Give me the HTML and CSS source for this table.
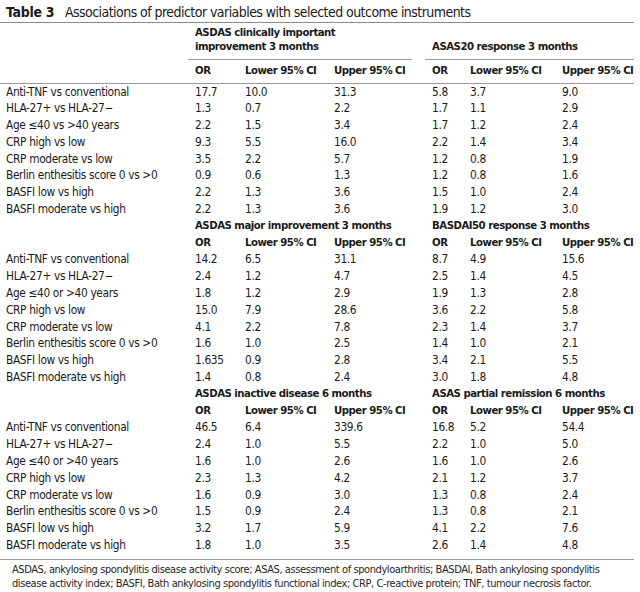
FILE: index.html
```html
<!DOCTYPE html>
<html>
<head>
<meta charset="utf-8">
<link rel="stylesheet" href="styles.css">
</head>
<body>
<div class="page">
  <div class="title"><span class="tnum">Table 3</span><span class="tcap">Associations of predictor variables with selected outcome instruments</span></div>
  <table class="data">
    <colgroup>
      <col class="c-label"><col class="c-or"><col class="c-lo"><col class="c-up"><col class="c-gap"><col class="c-or2"><col class="c-lo2"><col class="c-up2">
    </colgroup>
    <thead>
      <tr class="grp">
        <th></th>
        <th colspan="3" class="gh">ASDAS clinically important<br>improvement 3 months</th>
        <th class="gap"></th>
        <th colspan="3" class="gh">ASAS20 response 3 months</th>
      </tr>
      <tr class="sub">
        <th></th><th>OR</th><th>Lower 95% CI</th><th>Upper 95% CI</th><th></th><th>OR</th><th>Lower 95% CI</th><th>Upper 95% CI</th>
      </tr>
    </thead>
    <tbody>
      <tr><td>Anti-TNF vs conventional</td><td>17.7</td><td>10.0</td><td>31.3</td><td></td><td>5.8</td><td>3.7</td><td>9.0</td></tr>
      <tr><td>HLA-27+ vs HLA-27−</td><td>1.3</td><td>0.7</td><td>2.2</td><td></td><td>1.7</td><td>1.1</td><td>2.9</td></tr>
      <tr><td>Age ≤40 vs &gt;40 years</td><td>2.2</td><td>1.5</td><td>3.4</td><td></td><td>1.7</td><td>1.2</td><td>2.4</td></tr>
      <tr><td>CRP high vs low</td><td>9.3</td><td>5.5</td><td>16.0</td><td></td><td>2.2</td><td>1.4</td><td>3.4</td></tr>
      <tr><td>CRP moderate vs low</td><td>3.5</td><td>2.2</td><td>5.7</td><td></td><td>1.2</td><td>0.8</td><td>1.9</td></tr>
      <tr><td>Berlin enthesitis score 0 vs &gt;0</td><td>0.9</td><td>0.6</td><td>1.3</td><td></td><td>1.2</td><td>0.8</td><td>1.6</td></tr>
      <tr><td>BASFI low vs high</td><td>2.2</td><td>1.3</td><td>3.6</td><td></td><td>1.5</td><td>1.0</td><td>2.4</td></tr>
      <tr><td>BASFI moderate vs high</td><td>2.2</td><td>1.3</td><td>3.6</td><td></td><td>1.9</td><td>1.2</td><td>3.0</td></tr>
      <tr class="sec"><td></td><th colspan="3">ASDAS major improvement 3 months</th><td></td><th colspan="3">BASDAI50 response 3 months</th></tr>
      <tr class="sec"><td></td><th>OR</th><th>Lower 95% CI</th><th>Upper 95% CI</th><td></td><th>OR</th><th>Lower 95% CI</th><th>Upper 95% CI</th></tr>
      <tr><td>Anti-TNF vs conventional</td><td>14.2</td><td>6.5</td><td>31.1</td><td></td><td>8.7</td><td>4.9</td><td>15.6</td></tr>
      <tr><td>HLA-27+ vs HLA-27−</td><td>2.4</td><td>1.2</td><td>4.7</td><td></td><td>2.5</td><td>1.4</td><td>4.5</td></tr>
      <tr><td>Age ≤40 or &gt;40 years</td><td>1.8</td><td>1.2</td><td>2.9</td><td></td><td>1.9</td><td>1.3</td><td>2.8</td></tr>
      <tr><td>CRP high vs low</td><td>15.0</td><td>7.9</td><td>28.6</td><td></td><td>3.6</td><td>2.2</td><td>5.8</td></tr>
      <tr><td>CRP moderate vs low</td><td>4.1</td><td>2.2</td><td>7.8</td><td></td><td>2.3</td><td>1.4</td><td>3.7</td></tr>
      <tr><td>Berlin enthesitis score 0 vs &gt;0</td><td>1.6</td><td>1.0</td><td>2.5</td><td></td><td>1.4</td><td>1.0</td><td>2.1</td></tr>
      <tr><td>BASFI low vs high</td><td>1.635</td><td>0.9</td><td>2.8</td><td></td><td>3.4</td><td>2.1</td><td>5.5</td></tr>
      <tr><td>BASFI moderate vs high</td><td>1.4</td><td>0.8</td><td>2.4</td><td></td><td>3.0</td><td>1.8</td><td>4.8</td></tr>
      <tr class="sec"><td></td><th colspan="3">ASDAS inactive disease 6 months</th><td></td><th colspan="3">ASAS partial remission 6 months</th></tr>
      <tr class="sec"><td></td><th>OR</th><th>Lower 95% CI</th><th>Upper 95% CI</th><td></td><th>OR</th><th>Lower 95% CI</th><th>Upper 95% CI</th></tr>
      <tr><td>Anti-TNF vs conventional</td><td>46.5</td><td>6.4</td><td>339.6</td><td></td><td>16.8</td><td>5.2</td><td>54.4</td></tr>
      <tr><td>HLA-27+ vs HLA-27−</td><td>2.4</td><td>1.0</td><td>5.5</td><td></td><td>2.2</td><td>1.0</td><td>5.0</td></tr>
      <tr><td>Age ≤40 or &gt;40 years</td><td>1.6</td><td>1.0</td><td>2.6</td><td></td><td>1.6</td><td>1.0</td><td>2.6</td></tr>
      <tr><td>CRP high vs low</td><td>2.3</td><td>1.3</td><td>4.2</td><td></td><td>2.1</td><td>1.2</td><td>3.7</td></tr>
      <tr><td>CRP moderate vs low</td><td>1.6</td><td>0.9</td><td>3.0</td><td></td><td>1.3</td><td>0.8</td><td>2.4</td></tr>
      <tr><td>Berlin enthesitis score 0 vs &gt;0</td><td>1.5</td><td>0.9</td><td>2.4</td><td></td><td>1.3</td><td>0.8</td><td>2.1</td></tr>
      <tr><td>BASFI low vs high</td><td>3.2</td><td>1.7</td><td>5.9</td><td></td><td>4.1</td><td>2.2</td><td>7.6</td></tr>
      <tr class="last"><td>BASFI moderate vs high</td><td>1.8</td><td>1.0</td><td>3.5</td><td></td><td>2.6</td><td>1.4</td><td>4.8</td></tr>
    </tbody>
  </table>
  <p class="foot">ASDAS, ankylosing spondylitis disease activity score; ASAS, assessment of spondyloarthritis; BASDAI, Bath ankylosing spondylitis disease activity index; BASFI, Bath ankylosing spondylitis functional index; CRP, C-reactive protein; TNF, tumour necrosis factor.</p>
</div>
</body>
</html>
```

FILE: styles.css
```css
html, body {
  margin: 0;
  padding: 0;
  background: #ffffff;
}
.page {
  width: 634px;
  color: #1a1a1a;
  font-family: "DejaVu Sans Condensed", "Liberation Sans Narrow", "Arial Narrow", sans-serif;
}
.title {
  height: 22px;
  line-height: 24px;
  font-size: 14px;
  letter-spacing: -0.55px;
  border-bottom: 1px solid #8a8a8a;
  padding-left: 6px;
  white-space: nowrap;
}
.tnum {
  font-weight: bold;
  display: inline-block;
  width: 59px;
  letter-spacing: -0.3px;
}
.data {
  width: 634px;
  table-layout: fixed;
  border-collapse: collapse;
  border-spacing: 0;
  font-size: 11.8px;
  letter-spacing: -0.35px;
}
.c-label { width: 188px; }
.c-or { width: 50px; }
.c-lo { width: 89px; }
.c-up { width: 85px; }
.c-gap { width: 13px; }
.c-or2 { width: 38px; }
.c-lo2 { width: 92px; }
.c-up2 { width: 79px; }
.data td, .data th {
  padding: 0 0 0 7px;
  text-align: left;
  white-space: nowrap;
  line-height: 16.8px;
  height: 16.8px;
  vertical-align: middle;
}
.data th {
  font-weight: bold;
  font-size: 11.3px;
  letter-spacing: -0.5px;
}
.data td:first-child {
  padding-left: 6px;
}
.grp th {
  height: 36px;
  line-height: 14px;
  vertical-align: bottom;
  padding-bottom: 5px;
  box-sizing: border-box;
}
.grp .gh {
  border-bottom: 1px solid #9a9a9a;
}
.sub th {
  height: 22px;
  border-bottom: 1px solid #9a9a9a;
  padding-top: 1px;
}
.last td {
  border-bottom: 1px solid #9a9a9a;
  height: 22px;
  vertical-align: top;
}
.foot {
  margin: 3px 0 0 0;
  padding: 0 6px 0 12px;
  font-size: 11px;
  letter-spacing: -0.42px;
  line-height: 14px;
  color: #262626;
}
```
